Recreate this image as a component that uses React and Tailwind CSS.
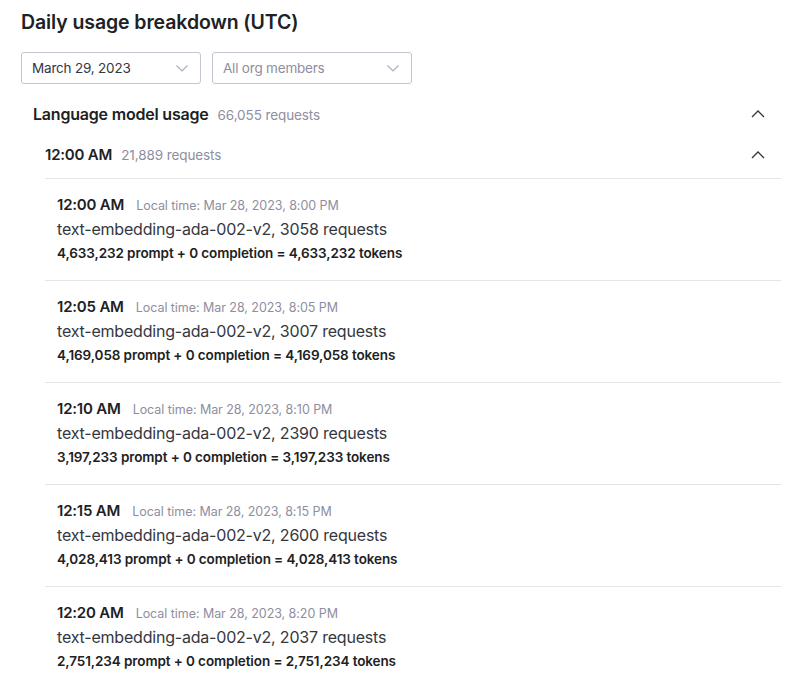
import React from 'react';

const ROWS = [
  { utc: "12:00 AM", local: "Mar 28, 2023, 8:00 PM", reqs: 3058, prompt: "4,633,232" },
  { utc: "12:05 AM", local: "Mar 28, 2023, 8:05 PM", reqs: 3007, prompt: "4,169,058" },
  { utc: "12:10 AM", local: "Mar 28, 2023, 8:10 PM", reqs: 2390, prompt: "3,197,233" },
  { utc: "12:15 AM", local: "Mar 28, 2023, 8:15 PM", reqs: 2600, prompt: "4,028,413" },
  { utc: "12:20 AM", local: "Mar 28, 2023, 8:20 PM", reqs: 2037, prompt: "2,751,234" },
];

function ChevronDown() {
  return (
    <svg width="14" height="14" viewBox="0 0 14 14" fill="none" className="text-[#acacbe]">
      <path d="M1.5 4.5L7 10L12.5 4.5" stroke="currentColor" strokeWidth="1.2" />
    </svg>
  );
}

function ChevronUp() {
  return (
    <svg width="16" height="16" viewBox="0 0 16 16" fill="none" className="text-[#353740]">
      <path d="M2 11L8 5L14 11" stroke="currentColor" strokeWidth="1.3" />
    </svg>
  );
}

export default function App() {
  return (
    <div className="min-h-screen bg-white pl-[21px] pr-[8px] pt-[8px] text-[#353740]" style={{ fontFamily: 'Inter, "Noto Sans", sans-serif' }}>
      <h1 className="text-[19.5px] leading-[28px] font-semibold text-[#202123] tracking-[-0.1px]">Daily usage breakdown (UTC)</h1>

      {/* Filters */}
      <div className="flex gap-[11px] mt-[16px]">
        <div className="w-[180px] h-[32px] border border-[#c5c5d2] rounded-[3px] flex items-center justify-between pl-[10px] pr-[11px]">
          <span className="text-[13.5px] text-[#353740] tracking-[-0.2px]">March 29, 2023</span>
          <ChevronDown />
        </div>
        <div className="w-[200px] h-[32px] border border-[#c5c5d2] rounded-[3px] flex items-center justify-between pl-[10px] pr-[11px]">
          <span className="text-[13.5px] text-[#8e8ea0] tracking-[-0.2px]">All org members</span>
          <ChevronDown />
        </div>
      </div>

      {/* Language model section */}
      <div className="mt-[16px] pl-[12px]">
        <div className="flex items-center justify-between h-[28px] pr-[15px]">
          <div className="flex items-baseline gap-[9px]">
            <span className="text-[16px] font-semibold text-[#202123] tracking-[-0.2px]">Language model usage</span>
            <span className="text-[13.5px] text-[#8e8ea0] tracking-[-0.1px]">66,055 requests</span>
          </div>
          <ChevronUp />
        </div>

        <div className="mt-[13px] pl-[12px]">
          <div className="flex items-center justify-between h-[28px] pr-[15px]">
            <div className="flex items-baseline gap-[9px]">
              <span className="text-[15px] font-semibold text-[#202123] tracking-[-0.2px]">12:00 AM</span>
              <span className="text-[13.5px] text-[#8e8ea0] tracking-[-0.1px]">21,889 requests</span>
            </div>
            <ChevronUp />
          </div>

          <div className="mt-[9px] border-t border-[#e5e5e5]">
            {ROWS.map((r) => (
              <div key={r.utc} className="border-b border-[#e5e5e5] pl-[12px] pt-[14px] pb-[15px]">
                <div className="flex items-baseline gap-[12px] h-[24px] leading-[24px]">
                  <span className="text-[15px] font-semibold text-[#202123] tracking-[-0.2px]">{r.utc}</span>
                  <span className="text-[12.5px] text-[#8e8ea0] tracking-[-0.05px]">Local time: {r.local}</span>
                </div>
                <div className="text-[16px] leading-[24px] text-[#353740] tracking-[-0.2px]">
                  text-embedding-ada-002-v2, {r.reqs} requests
                </div>
                <div className="text-[13.5px] leading-[24px] font-semibold text-[#202123] tracking-[-0.1px]">
                  {r.prompt} prompt + 0 completion = {r.prompt} tokens
                </div>
              </div>
            ))}
          </div>
        </div>
      </div>
    </div>
  );
}
